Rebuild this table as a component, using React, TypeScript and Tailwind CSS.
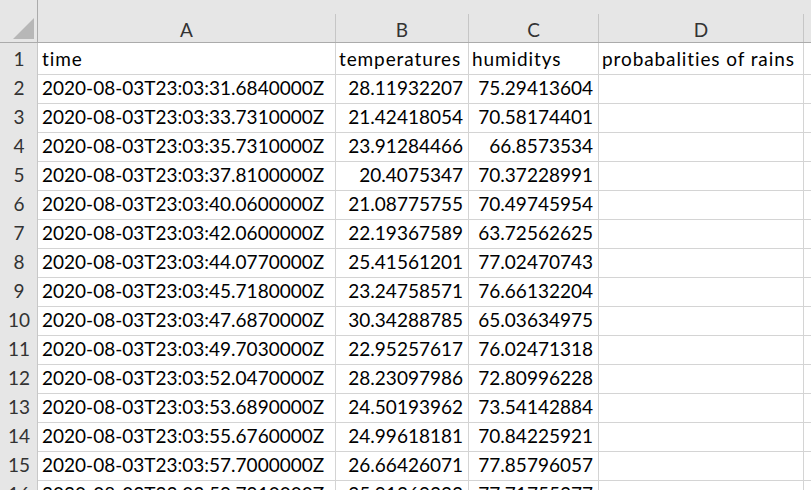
const rows: [string, string, string][] = [
  ['2020-08-03T23:03:31.6840000Z', '28.11932207', '75.29413604'],
  ['2020-08-03T23:03:33.7310000Z', '21.42418054', '70.58174401'],
  ['2020-08-03T23:03:35.7310000Z', '23.91284466', '66.8573534'],
  ['2020-08-03T23:03:37.8100000Z', '20.4075347', '70.37228991'],
  ['2020-08-03T23:03:40.0600000Z', '21.08775755', '70.49745954'],
  ['2020-08-03T23:03:42.0600000Z', '22.19367589', '63.72562625'],
  ['2020-08-03T23:03:44.0770000Z', '25.41561201', '77.02470743'],
  ['2020-08-03T23:03:45.7180000Z', '23.24758571', '76.66132204'],
  ['2020-08-03T23:03:47.6870000Z', '30.34288785', '65.03634975'],
  ['2020-08-03T23:03:49.7030000Z', '22.95257617', '76.02471318'],
  ['2020-08-03T23:03:52.0470000Z', '28.23097986', '72.80996228'],
  ['2020-08-03T23:03:53.6890000Z', '24.50193962', '73.54142884'],
  ['2020-08-03T23:03:55.6760000Z', '24.99618181', '70.84225921'],
  ['2020-08-03T23:03:57.7000000Z', '26.66426071', '77.85796057'],
  ['2020-08-03T23:03:59.7910000Z', '25.91269323', '77.71755377'],
];

const cols = 'grid grid-cols-[38px_298px_133px_130px_205px_1fr]';

export default function App() {
  return (
    <div
      className="w-[811px] h-[490px] overflow-hidden bg-white text-[19px] text-black"
      style={{ fontFamily: 'Lato, "Open Sans", sans-serif' }}
    >
      {/* column headers */}
      <div className={`${cols} h-[43px] bg-[#e6e6e6] border-b border-[#ababab] text-[#333]`}>
        <div className="border-r border-[#ababab] relative">
          <svg className="absolute left-[13px] top-[18px]" width="22" height="21" viewBox="0 0 22 21">
            <polygon points="21,0 21,21 0,21" fill="#b7b7b7" />
          </svg>
        </div>
        {['A', 'B', 'C', 'D', ''].map((c, i) => (
          <div key={i} className="pt-[14px] h-full">
            <div className={`h-full flex items-center justify-center leading-none pt-[3px] ${i < 4 ? 'border-r border-[#c6c6c6]' : ''}`}>
              {c}
            </div>
          </div>
        ))}
      </div>

      {/* row 1: titles */}
      <div className={`${cols} h-[29px] tracking-[0.9px]`}>
        <div className="bg-[#e6e6e6] border-r border-[#ababab] border-b border-[#c8c8c8] text-[#333] flex items-center justify-center pt-[2px] pl-px tracking-normal">1</div>
        <div className="border-r border-b border-[#d4d4d4] px-[4px] pt-[2px] flex items-center">time</div>
        <div className="border-r border-b border-[#d4d4d4] px-[3px] pt-[2px] flex items-center">temperatures</div>
        <div className="border-r border-b border-[#d4d4d4] px-[3px] pt-[2px] flex items-center">humiditys</div>
        <div className="border-r border-b border-[#d4d4d4] px-[3px] pt-[2px] flex items-center whitespace-nowrap">probabalities of rains</div>
        <div className="border-b border-[#d4d4d4]" />
      </div>

      {rows.map((r, i) => (
        <div key={i} className={`${cols} h-[29px]`}>
          <div className="bg-[#e6e6e6] border-r border-[#ababab] border-b border-[#c8c8c8] text-[#333] flex items-center justify-center pt-[2px] pl-px">
            {i + 2}
          </div>
          <div className="border-r border-b border-[#d4d4d4] px-[4px] pt-[2px] flex items-center">{r[0]}</div>
          <div className="border-r border-b border-[#d4d4d4] px-[5px] pt-[2px] flex items-center justify-end">{r[1]}</div>
          <div className="border-r border-b border-[#d4d4d4] px-[5px] pt-[2px] flex items-center justify-end">{r[2]}</div>
          <div className="border-r border-b border-[#d4d4d4]" />
          <div className="border-b border-[#d4d4d4]" />
        </div>
      ))}
    </div>
  );
}
